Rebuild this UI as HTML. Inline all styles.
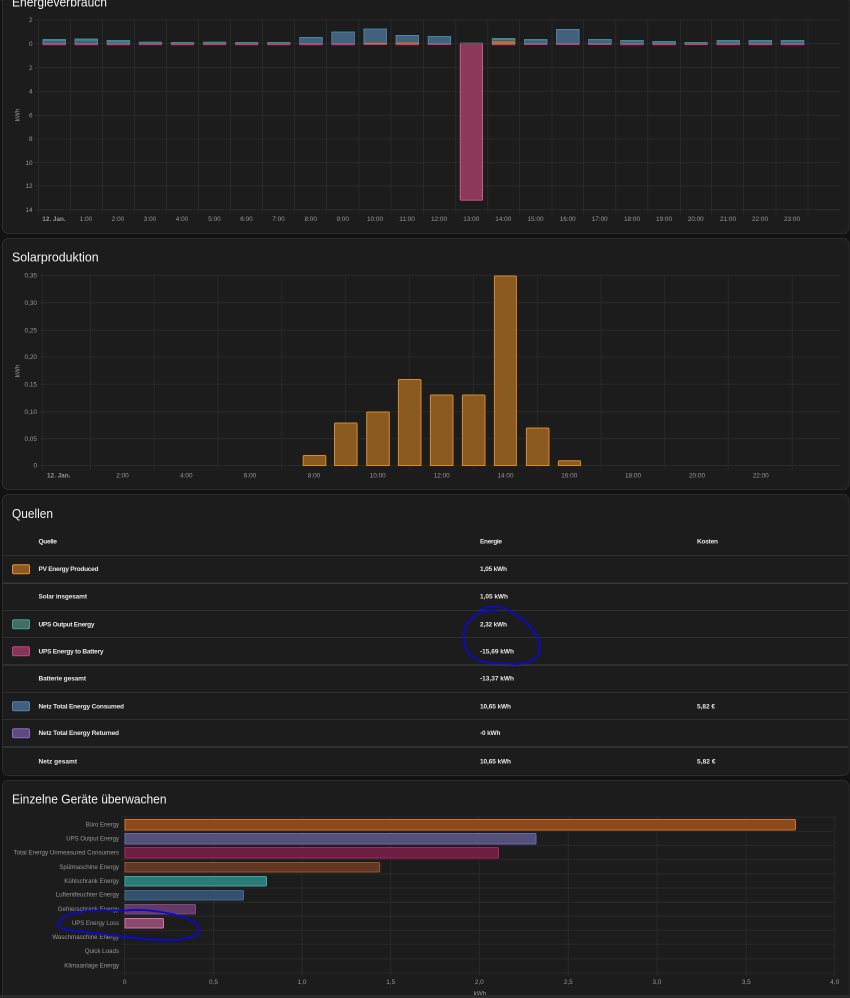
<!DOCTYPE html>
<html lang="de"><head><meta charset="utf-8"><title>Energie</title>
<style>
html,body{margin:0;padding:0;background:#121212;width:850px;height:998px;overflow:hidden}
svg{display:block;filter:blur(.3px)}
text{font-family:"Liberation Sans",sans-serif}
.card{fill:#1c1c1c;stroke:#2c2c2c;stroke-width:1}
.g{stroke:#292929;stroke-width:1;fill:none}
.a{fill:#989898;font-size:6.4px}
.ar{fill:#989898;font-size:6.4px;text-anchor:end}
.am{fill:#989898;font-size:6.4px;text-anchor:middle}
.h{fill:#f2f2f2;font-size:13.2px}
.c{fill:#e8e8e8;font-size:6.5px;font-weight:bold}
.l{stroke:#303030;stroke-width:1}
.lb{stroke:#383838;stroke-width:1.5}
.b{fill:#41617c;stroke:#4e8fb6;stroke-width:.8}
.t{fill:#3f8a8a;stroke:none}
.p{fill:#c0406e;stroke:none}
.o{fill:#c8741e;stroke:none}
.s{fill:#8a5a20;stroke:#d98a2a;stroke-width:1}
.k{fill:none;stroke:#0a0ad6;stroke-width:1.8;stroke-linecap:round;stroke-linejoin:round}
</style></head><body>
<svg width="850" height="998" viewBox="0 0 850 998" xmlns="http://www.w3.org/2000/svg">
<rect x="0" y="0" width="850" height="998" fill="#121212"/>
<rect x="0" y="0" width="850" height="1.2" fill="#14212a"/>

<!-- Card 1 -->
<rect class="card" x="2.5" y="-20" width="846.5" height="253.5" rx="6"/>
<text class="h" x="12" y="6.5" textLength="95" lengthAdjust="spacingAndGlyphs">Energieverbrauch</text>
<path class="g" d="M35 20H840.7M35 43.5H840.7M35 67.5H840.7M35 91.3H840.7M35 115.2H840.7M35 139H840.7M35 162.7H840.7M35 186H840.7M35 209.7H840.7"/>
<path class="g" d="M38.5 20V214M70.5 20V214M102.5 20V214M134.5 20V214M166.5 20V214M198.5 20V214M230.5 20V214M262.5 20V214M294.5 20V214M326.5 20V214M359 20V214M391 20V214M423.5 20V214M455.7 20V214M487.7 20V214M519.5 20V214M552 20V214M583.5 20V214M615.7 20V214M647.7 20V214M680.5 20V214M711.5 20V214M743.5 20V214M776 20V214M808 20V214"/>
<g>
<rect class="b" x="42.9" y="39.6" width="22.6" height="4"/><rect class="t" x="42.5" y="39" width="23.4" height="2"/><rect class="p" x="42.5" y="43.6" width="23.4" height="1.6"/>
<rect class="b" x="75" y="39" width="22.6" height="4.6"/><rect class="t" x="74.6" y="38.6" width="23.4" height="2"/><rect class="p" x="74.6" y="43.6" width="23.4" height="1.6"/>
<rect class="b" x="107.1" y="40.6" width="22.6" height="3"/><rect class="t" x="106.7" y="40" width="23.4" height="2.2"/><rect class="p" x="106.7" y="43.6" width="23.4" height="1.6"/>
<rect class="t" x="138.8" y="41.7" width="23.2" height="2"/><rect class="p" x="138.8" y="43.6" width="23.2" height="1.5"/>
<rect class="t" x="170.9" y="42" width="23.2" height="1.7"/><rect class="p" x="170.9" y="43.6" width="23.2" height="1.6"/>
<rect class="t" x="203" y="41.7" width="23.2" height="2"/><rect class="p" x="203" y="43.6" width="23.2" height="1.5"/>
<rect class="t" x="235.1" y="42" width="23.2" height="1.7"/><rect class="p" x="235.1" y="43.6" width="23.2" height="1.6"/>
<rect class="t" x="267.2" y="42" width="23.2" height="1.7"/><rect class="p" x="267.2" y="43.6" width="23.2" height="1.6"/>
<rect class="b" x="299.7" y="37.4" width="22.6" height="6.2"/><rect class="p" x="299.3" y="43.6" width="23.4" height="1.6"/>
<rect class="b" x="331.8" y="32" width="22.6" height="11.6"/><rect class="p" x="331.4" y="43.6" width="23.4" height="1.6"/>
<rect class="b" x="363.9" y="29" width="22.6" height="14.2"/><rect class="o" x="363.5" y="43" width="23.4" height="1"/><rect class="p" x="363.5" y="44" width="23.4" height="1"/>
<rect class="b" x="396" y="35.4" width="22.6" height="8"/><rect class="o" x="395.6" y="42.4" width="23.4" height="1.4"/><rect class="p" x="395.6" y="43.8" width="23.4" height="1.4"/>
<rect class="b" x="428.1" y="36.6" width="22.6" height="7"/><rect class="t" x="427.7" y="36" width="23.4" height="1"/><rect class="p" x="427.7" y="43.6" width="23.4" height="1.4"/>
<rect x="460.2" y="43.4" width="22.4" height="156.8" rx="1.2" fill="#8b3a5c" stroke="#d85b8a" stroke-width=".9"/><rect x="460" y="42.4" width="22.8" height="1.4" fill="#3c5a50"/>
<rect class="b" x="492.3" y="38.6" width="22.6" height="5"/><rect class="t" x="491.9" y="38" width="23.4" height="2"/><rect class="o" x="491.9" y="41.4" width="23.4" height="2.4"/><rect class="p" x="491.9" y="43.8" width="23.4" height="1.4"/>
<rect class="b" x="524.4" y="39.6" width="22.6" height="4"/><rect class="t" x="524" y="39" width="23.4" height="1.4"/><rect class="p" x="524" y="43.6" width="23.4" height="1.4"/>
<rect class="b" x="556.5" y="29.4" width="22.6" height="14.2"/><rect class="p" x="556.1" y="43.6" width="23.4" height="1.4"/>
<rect class="b" x="588.6" y="39.6" width="22.6" height="4"/><rect class="t" x="588.2" y="39" width="23.4" height="1.2"/><rect class="p" x="588.2" y="43.6" width="23.4" height="1.4"/>
<rect class="b" x="620.7" y="40.4" width="22.6" height="3.2"/><rect class="t" x="620.3" y="40" width="23.4" height="1.6"/><rect class="p" x="620.3" y="43.6" width="23.4" height="1.6"/>
<rect class="b" x="652.8" y="41.4" width="22.6" height="2.2"/><rect class="t" x="652.4" y="41" width="23.4" height="1.4"/><rect class="p" x="652.4" y="43.6" width="23.4" height="1.6"/>
<rect class="t" x="684.5" y="42" width="23.2" height="1.7"/><rect class="p" x="684.5" y="43.6" width="23.2" height="1.5"/>
<rect class="b" x="717" y="40.4" width="22.6" height="3.2"/><rect class="t" x="716.6" y="40" width="23.4" height="1.8"/><rect class="p" x="716.6" y="43.6" width="23.4" height="1.6"/>
<rect class="b" x="749.1" y="40.4" width="22.6" height="3.2"/><rect class="t" x="748.7" y="40" width="23.4" height="1.8"/><rect class="p" x="748.7" y="43.6" width="23.4" height="1.6"/>
<rect class="b" x="781.2" y="40.4" width="22.6" height="3.2"/><rect class="t" x="780.8" y="40" width="23.4" height="1.6"/><rect class="p" x="780.8" y="43.6" width="23.4" height="1.6"/>
</g>
<text class="ar" x="32.5" y="22">2</text><text class="ar" x="32.5" y="45.8">0</text><text class="ar" x="32.5" y="69.8">2</text><text class="ar" x="32.5" y="93.5">4</text><text class="ar" x="32.5" y="117.4">6</text><text class="ar" x="32.5" y="141.2">8</text><text class="ar" x="32.5" y="164.9">10</text><text class="ar" x="32.5" y="188.2">12</text><text class="ar" x="32.5" y="211.9">14</text>
<text class="am" transform="translate(19.5 115) rotate(-90)">kWh</text>
<g>
<text class="am" x="54" y="221" font-weight="bold">12. Jan.</text><text class="am" x="86" y="221">1:00</text><text class="am" x="118" y="221">2:00</text><text class="am" x="150" y="221">3:00</text><text class="am" x="182" y="221">4:00</text><text class="am" x="214.5" y="221">5:00</text><text class="am" x="246.5" y="221">6:00</text><text class="am" x="278.5" y="221">7:00</text><text class="am" x="310.7" y="221">8:00</text><text class="am" x="342.7" y="221">9:00</text><text class="am" x="375" y="221">10:00</text><text class="am" x="407" y="221">11:00</text><text class="am" x="439" y="221">12:00</text><text class="am" x="471.3" y="221">13:00</text><text class="am" x="503.3" y="221">14:00</text><text class="am" x="535.5" y="221">15:00</text><text class="am" x="567.7" y="221">16:00</text><text class="am" x="599.7" y="221">17:00</text><text class="am" x="632" y="221">18:00</text><text class="am" x="664" y="221">19:00</text><text class="am" x="695.7" y="221">20:00</text><text class="am" x="728" y="221">21:00</text><text class="am" x="760" y="221">22:00</text><text class="am" x="792" y="221">23:00</text>
</g>

<!-- Card 2 -->
<rect class="card" x="2.5" y="238.5" width="846.5" height="251" rx="6"/>
<text class="h" x="12" y="261.5" textLength="86.7" lengthAdjust="spacingAndGlyphs">Solarproduktion</text>
<path class="g" d="M40 275.3H840.7M40 302.7H840.7M40 330.3H840.7M40 357H840.7M40 384.3H840.7M40 411.7H840.7M40 438.7H840.7M40 465.5H840.7"/>
<path class="g" d="M42.7 275V470M90.5 275V470M154.3 275V470M218 275V470M281.7 275V470M345.3 275V470M409.3 275V470M473.3 275V470M537.3 275V470M601 275V470M664.7 275V470M728.3 275V470M792.3 275V470"/>
<g>
<path class="s" d="M303.2 465.5V456.5q0-1 1-1h20.6q1 0 1 1V465.5z"/>
<path class="s" d="M334.5 465.5V424q0-1 1-1h20.6q1 0 1 1V465.5z"/>
<path class="s" d="M366.7 465.5V413q0-1 1-1h20.6q1 0 1 1V465.5z"/>
<path class="s" d="M398.4 465.5V380.5q0-1 1-1h20.6q1 0 1 1V465.5z"/>
<path class="s" d="M430.4 465.5V396q0-1 1-1h20.6q1 0 1 1V465.5z"/>
<path class="s" d="M462.4 465.5V396q0-1 1-1h20.6q1 0 1 1V465.5z"/>
<path class="s" d="M494.4 465.5V277q0-1 1-1h20q1 0 1 1V465.5z"/>
<path class="s" d="M526.4 465.5V429q0-1 1-1h20.6q1 0 1 1V465.5z"/>
<path class="s" d="M558.4 465.5V461.7q0-1 1-1h20.2q1 0 1 1V465.5z"/>
</g>
<text class="ar" x="37" y="277.5">0,35</text><text class="ar" x="37" y="304.9">0,30</text><text class="ar" x="37" y="332.5">0,25</text><text class="ar" x="37" y="359.2">0,20</text><text class="ar" x="37" y="386.5">0,15</text><text class="ar" x="37" y="413.9">0,10</text><text class="ar" x="37" y="440.9">0,05</text><text class="ar" x="37" y="467.7">0</text>
<text class="am" transform="translate(19.5 371) rotate(-90)">kWh</text>
<g>
<text class="am" x="58.7" y="477.3" font-weight="bold">12. Jan.</text><text class="am" x="122.5" y="477.3">2:00</text><text class="am" x="186.3" y="477.3">4:00</text><text class="am" x="250" y="477.3">6:00</text><text class="am" x="314" y="477.3">8:00</text><text class="am" x="377.7" y="477.3">10:00</text><text class="am" x="441.7" y="477.3">12:00</text><text class="am" x="505.5" y="477.3">14:00</text><text class="am" x="569.3" y="477.3">16:00</text><text class="am" x="633" y="477.3">18:00</text><text class="am" x="697" y="477.3">20:00</text><text class="am" x="760.7" y="477.3">22:00</text>
</g>

<!-- Card 3 -->
<rect class="card" x="2.5" y="494.5" width="846.5" height="281" rx="6"/>
<text class="h" x="12" y="518" textLength="41" lengthAdjust="spacingAndGlyphs">Quellen</text>
<path class="l" d="M3 555.5H848M3 610.5H848M3 637.5H848M3 692.5H848M3 719.5H848"/>
<path class="lb" d="M3 583.3H848M3 665H848M3 747H848"/>
<rect x="12.5" y="564.8" width="17" height="9" rx="1.5" fill="#8a5a22" stroke="#e8902c"/>
<rect x="12.5" y="619.8" width="17" height="9" rx="1.5" fill="#3e6e66" stroke="#4c9b90"/>
<rect x="12.5" y="646.8" width="17" height="9" rx="1.5" fill="#84365a" stroke="#c94472"/>
<rect x="12.5" y="701.8" width="17" height="9" rx="1.5" fill="#3f5f7c" stroke="#4f86b0"/>
<rect x="12.5" y="728.8" width="17" height="9" rx="1.5" fill="#5f4a80" stroke="#8a6cc0"/>
<g>
<text class="c" x="38.5" y="543.3" textLength="18.5">Quelle</text>
<text class="c" x="480" y="543.3" textLength="22">Energie</text>
<text class="c" x="697" y="543.3" textLength="21">Kosten</text>
<text class="c" x="38.5" y="571" textLength="60">PV Energy Produced</text>
<text class="c" x="480" y="571" textLength="27">1,05 kWh</text>
<text class="c" x="38.5" y="598.6" textLength="48.5">Solar insgesamt</text>
<text class="c" x="480" y="598.6" textLength="28">1,05 kWh</text>
<text class="c" x="38.5" y="626.3" textLength="56">UPS Output Energy</text>
<text class="c" x="480" y="626.3" textLength="27">2,32 kWh</text>
<text class="c" x="38.5" y="653.3" textLength="65">UPS Energy to Battery</text>
<text class="c" x="480" y="653.3" textLength="34">-15,69 kWh</text>
<text class="c" x="38.5" y="680.6" textLength="47.5">Batterie gesamt</text>
<text class="c" x="480" y="680.6" textLength="34">-13,37 kWh</text>
<text class="c" x="38.5" y="708.3" textLength="85.5">Netz Total Energy Consumed</text>
<text class="c" x="480" y="708.3" textLength="31">10,65 kWh</text>
<text class="c" x="697" y="708.3" textLength="18">5,82 €</text>
<text class="c" x="38.5" y="735" textLength="80.5">Netz Total Energy Returned</text>
<text class="c" x="480" y="735" textLength="20.5">-0 kWh</text>
<text class="c" x="38.5" y="763.3" textLength="38.5">Netz gesamt</text>
<text class="c" x="480" y="763.3" textLength="31">10,65 kWh</text>
<text class="c" x="697" y="763.3" textLength="18.5">5,82 €</text>
</g>
<path class="k" d="M481 609.3C485 607 490 606.5 497 606.8C503 607 508 610 514 613.5C522 619 530 625 535 633C540 640 541 648 539 654C536 660 526 664 515 664.3C505 663 495 663 487 662.5C480 661.5 473 658 469 654C465 649 463.5 640 464 632C466 624 471 618 478 613.5C483 611 490 610.5 496.7 610.7"/>

<!-- Card 4 -->
<rect class="card" x="2.5" y="780.5" width="846.5" height="240" rx="6"/>
<text class="h" x="12" y="803.5" textLength="154.5" lengthAdjust="spacingAndGlyphs">Einzelne Geräte überwachen</text>
<path class="g" d="M122 817H834.7M122 831.3H834.7M122 845.3H834.7M122 859.3H834.7M122 874H834.7M122 888H834.7M122 902.3H834.7M122 916.3H834.7M122 930.3H834.7M122 944.3H834.7M122 959H834.7M122 973H834.7"/>
<path class="g" d="M124.7 817V976M213.5 817V976M302 817V976M390.7 817V976M479.3 817V976M568.3 817V976M657 817V976M746.3 817V976M834.7 817V976"/>
<g stroke-width="1">
<path d="M125 819.5H794.5q1 0 1 1V829q0 1-1 1H125z" fill="#8a4a1c" stroke="#d8701e"/>
<path d="M125 833.5H535q1 0 1 1V843q0 1-1 1H125z" fill="#535079" stroke="#6a68b0"/>
<path d="M125 847.5H497.5q1 0 1 1V857q0 1-1 1H125z" fill="#6e1e42" stroke="#a8245a"/>
<path d="M125 862.5H378.7q1 0 1 1V871q0 1-1 1H125z" fill="#613823" stroke="#9a5328"/>
<path d="M125 876.5H265.5q1 0 1 1V885q0 1-1 1H125z" fill="#2e7a76" stroke="#38a8a0"/>
<path d="M125 890.5H242.5q1 0 1 1V899q0 1-1 1H125z" fill="#34506c" stroke="#3d6a90"/>
<path d="M125 904.5H194.5q1 0 1 1V913q0 1-1 1H125z" fill="#623a68" stroke="#7a4a80"/>
<path d="M125 918.5H162.5q1 0 1 1V927q0 1-1 1H125z" fill="#8a4a70" stroke="#e070a8"/>
</g>
<g>
<text class="ar" x="119" y="826.5" textLength="33.3" lengthAdjust="spacingAndGlyphs">Büro Energy</text>
<text class="ar" x="119" y="840.5" textLength="52.7" lengthAdjust="spacingAndGlyphs">UPS Output Energy</text>
<text class="ar" x="119" y="854.5" textLength="105.5" lengthAdjust="spacingAndGlyphs">Total Energy Unmeasured Consumers</text>
<text class="ar" x="119" y="868.9" textLength="59.7" lengthAdjust="spacingAndGlyphs">Spülmaschine Energy</text>
<text class="ar" x="119" y="883.2" textLength="54.7" lengthAdjust="spacingAndGlyphs">Kühlschrank Energy</text>
<text class="ar" x="119" y="896.5" textLength="63.3" lengthAdjust="spacingAndGlyphs">Luftentfeuchter Energy</text>
<text class="ar" x="119" y="910.9" textLength="61.3" lengthAdjust="spacingAndGlyphs">Gefrierschrank Energy</text>
<text class="ar" x="119" y="924.9" textLength="47" lengthAdjust="spacingAndGlyphs">UPS Energy Loss</text>
<text class="ar" x="119" y="938.9" textLength="66.7" lengthAdjust="spacingAndGlyphs">Waschmaschine Energy</text>
<text class="ar" x="119" y="953.2" textLength="34.3" lengthAdjust="spacingAndGlyphs">Quick Loads</text>
<text class="ar" x="119" y="967.5" textLength="54.7" lengthAdjust="spacingAndGlyphs">Klimaanlage Energy</text>
</g>
<path class="k" d="M123.3 910.7C130 910 137 909.8 143.3 910C155 911 165 912.5 173.3 914.3C182 916.5 189 919 193.3 921.7C197 924.5 199 927 199 930C199 932 198 934 196.7 935C190 937.5 184 939 176.7 940C168 940.5 158 940 150 939.3C141 938.5 132 937.5 123.3 936.7C109 935 96 933.5 83.3 931.7C76 931 69 930.5 63.3 929C59.5 927.5 58 925.5 58.3 923.3C59 920.5 61 918.5 63.3 916.7C70 914 78 912.3 86.7 910.7C98 910 110 910.2 123.3 910.7"/>
<g>
<text class="am" x="124.7" y="984">0</text><text class="am" x="213.5" y="984">0,5</text><text class="am" x="302" y="984">1,0</text><text class="am" x="390.7" y="984">1,5</text><text class="am" x="479.3" y="984">2,0</text><text class="am" x="568.3" y="984">2,5</text><text class="am" x="657" y="984">3,0</text><text class="am" x="746.3" y="984">3,5</text><text class="am" x="834.7" y="984">4,0</text>
<text class="am" x="480" y="995.5">kWh</text>
</g>
<rect x="0" y="995" width="850" height="3" fill="#2b2a2a"/>
</svg>
</body></html>
